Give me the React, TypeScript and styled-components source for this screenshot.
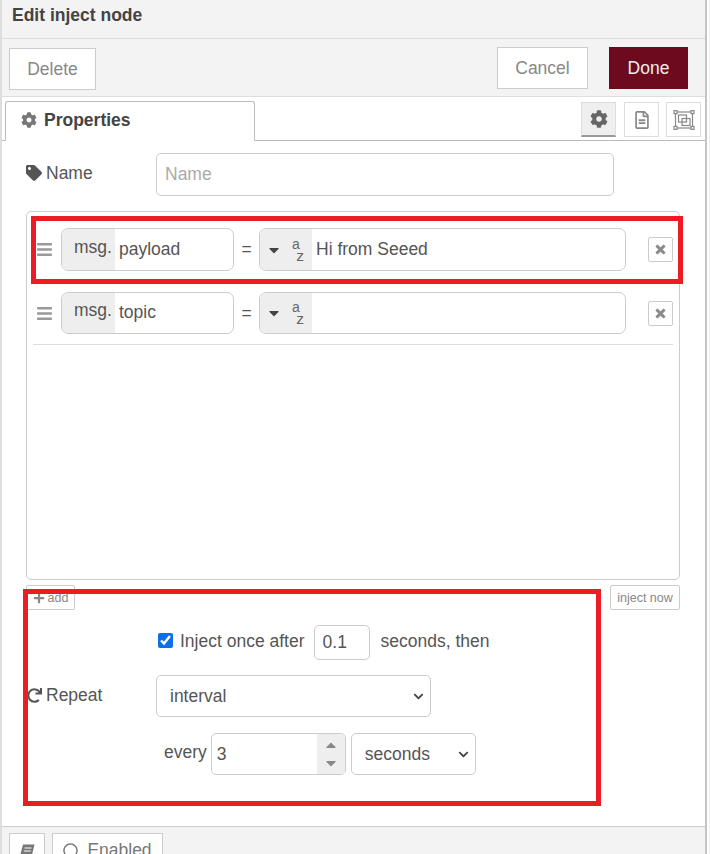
import React from "react";
import styled, { createGlobalStyle } from "styled-components";
import {
  FaBars,
  FaCaretDown,
  FaCaretUp,
  FaChevronDown,
  FaCog,
  FaPlus,
  FaRedo,
  FaRegCircle,
  FaRegFileAlt,
  FaTag,
  FaTimes,
} from "react-icons/fa";

const GlobalStyle = createGlobalStyle`
  html, body {
    margin: 0;
    padding: 0;
    background: #fff;
  }
  * {
    box-sizing: border-box;
  }
`;

const Page = styled.div`
  position: relative;
  width: 710px;
  height: 854px;
  overflow: hidden;
  display: flex;
  flex-direction: column;
  padding-right: 2px;
  border-right: 1px solid #efefef;
  font-family: "Liberation Sans", Arial, sans-serif;
  font-size: 17.5px;
  color: #555;
  background: #fff;
`;

const Tray = styled.div`
  flex: 1;
  display: flex;
  flex-direction: column;
  min-height: 0;
  border-left: 2px solid #dedede;
  border-right: 2px solid #c4c4c4;
`;

const Header = styled.div`
  height: 39px;
  flex: none;
  padding: 5px 0 0 10px;
  background: #f3f3f3;
  border-bottom: 1px solid #ddd;
  font-weight: bold;
  color: #444;
  line-height: 20px;
`;

const Toolbar = styled.div`
  height: 58px;
  flex: none;
  display: flex;
  align-items: flex-start;
  padding: 9px 17px 0 7px;
  background: #f3f3f3;
  border-bottom: 1px solid #ddd;
`;

const Button = styled.div<{ $primary?: boolean; $width: number }>`
  width: ${(p) => p.$width}px;
  height: 42px;
  display: flex;
  align-items: center;
  justify-content: center;
  border: 1px solid ${(p) => (p.$primary ? "#6e0a1e" : "#ccc")};
  background: ${(p) => (p.$primary ? "#6e0a1e" : "#fff")};
  color: ${(p) => (p.$primary ? "#eee" : "#888")};
`;

const ToolbarRight = styled.div`
  margin-left: auto;
  margin-top: -1px;
  display: flex;
  gap: 21px;
`;

const TabBar = styled.div`
  height: 44px;
  flex: none;
  display: flex;
  align-items: flex-start;
  padding: 4px 4px 0 3px;
  border-bottom: 1px solid #bbb;
`;

const Tab = styled.div`
  width: 250px;
  height: 40px;
  display: flex;
  align-items: center;
  gap: 7px;
  padding: 0 0 2px 15px;
  border: 1px solid #bbb;
  border-bottom: 1px solid #fff;
  border-radius: 3px 3px 0 0;
  background: #fff;
  font-weight: bold;
  color: #444;

  svg {
    color: #777;
    font-size: 16px;
  }
`;

const TabTools = styled.div`
  margin-left: auto;
  margin-top: 1px;
  display: flex;
  gap: 7px;
`;

const TabTool = styled.div<{ $active?: boolean }>`
  width: 35px;
  height: 35px;
  margin-right: ${(p) => (p.$active ? 1 : 0)}px;
  display: flex;
  align-items: center;
  justify-content: center;
  border: 1px solid #ddd;
  border-bottom: ${(p) => (p.$active ? "2px solid #999" : "1px solid #ddd")};
  background: ${(p) => (p.$active ? "#efefef" : "#fff")};
  color: ${(p) => (p.$active ? "#666" : "#888")};
  font-size: 18px;
`;

const Body = styled.div`
  flex: 1;
  min-height: 0;
  padding: 12px 0 0 24px;
`;

const FormRow = styled.div`
  display: flex;
  align-items: center;
`;

const NameRow = styled(FormRow)`
  height: 43px;
`;

const Label = styled.label<{ $drop?: number }>`
  width: 130px;
  flex: none;
  display: flex;
  align-items: center;
  gap: 4px;
  padding-bottom: ${(p) => p.$drop ?? 3}px;

  svg {
    font-size: 16px;
    color: #555;
  }
`;

const RepeatIcon = styled(FaRedo)`
  margin-left: 1px;
  width: 15px;
  height: 15px;
`;

const TextInput = styled.input<{ $width: number }>`
  width: ${(p) => p.$width}px;
  height: 43px;
  padding: 0 8px;
  border: 1px solid #ccc;
  border-radius: 5px;
  background: #fff;
  font: inherit;
  color: #555;
  outline: none;

  &::placeholder {
    color: #aaa;
    opacity: 1;
  }
`;

const DelayInput = styled(TextInput)`
  height: 35px;
  margin: 0 11px 0 9px;
`;

const ListBox = styled.div`
  width: 654px;
  height: 369px;
  margin-top: 15px;
  padding: 5px 6px 0;
  border: 1px solid #ccc;
  border-radius: 5px;
`;

const PropRow = styled.div<{ $last?: boolean }>`
  display: flex;
  align-items: center;
  height: ${(p) => (p.$last ? 63 : 65)}px;
  border-bottom: ${(p) => (p.$last ? "1px solid #ddd" : "none")};
`;

const Handle = styled.div`
  width: 28px;
  flex: none;
  display: flex;
  justify-content: center;
  color: #999;
  font-size: 17px;
  padding-right: 5px;
`;

const FieldBox = styled.div<{ $width: number }>`
  width: ${(p) => p.$width}px;
  height: 42.5px;
  flex: none;
  display: flex;
  align-items: center;
  overflow: hidden;
  border: 1px solid #ccc;
  border-radius: 7px;
  background: #fff;
`;

const MsgPrefix = styled.div`
  width: 53px;
  height: 100%;
  flex: none;
  display: flex;
  align-items: center;
  padding: 0 0 5px 12px;
  background: #eee;
`;

const FieldText = styled.div`
  padding-left: 4px;
  padding-bottom: 1px;
`;

const TypeSelect = styled.div`
  width: 52px;
  height: 100%;
  flex: none;
  display: flex;
  align-items: center;
  padding-left: 6px;
  background: #eee;
  color: #444;
  font-size: 16px;
`;

const TypeGlyph = styled.div`
  width: 12px;
  margin-left: 10px;
  display: flex;
  flex-direction: column;
  font-size: 14px;
  line-height: 12px;
  color: #666;
`;

const GlyphZ = styled.span`
  align-self: flex-end;
  font-size: 15.5px;
`;

const Equals = styled.div`
  width: 25px;
  flex: none;
  text-align: center;
`;

const RemoveButton = styled.div`
  width: 25px;
  height: 25px;
  margin-left: 22px;
  flex: none;
  display: flex;
  align-items: center;
  justify-content: center;
  border: 1px solid #ccc;
  border-radius: 2px;
  color: #888;
  font-size: 13px;

  svg {
    stroke: #888;
    stroke-width: 30;
  }
`;

const ListActions = styled.div`
  width: 654px;
  margin-top: 5px;
  display: flex;
  justify-content: space-between;
`;

const SmallButton = styled.div<{ $width: number }>`
  width: ${(p) => p.$width}px;
  height: 25px;
  display: flex;
  align-items: center;
  justify-content: center;
  gap: 3px;
  border: 1px solid #ccc;
  border-radius: 2px;
  font-size: 12.5px;
  color: #888;
`;

const OnceRow = styled(FormRow)`
  height: 35px;
  margin-top: 15px;
  padding-left: 132px;
`;

const Checkbox = styled.input`
  width: 15px;
  height: 15px;
  margin: 0 7px 5px 0;
  accent-color: #0b6fe8;
`;

const TextLabel = styled.span`
  padding-bottom: 3px;
`;

const RepeatRow = styled(FormRow)`
  margin-top: 15px;
  height: 42px;
`;

const SelectWrap = styled.div<{ $width: number }>`
  position: relative;
  width: ${(p) => p.$width}px;
  height: 42px;
  flex: none;

  svg {
    position: absolute;
    right: 7px;
    top: 16px;
    width: 11px;
    height: 11px;
    color: #444;
    pointer-events: none;
  }
`;

const NativeSelect = styled.select`
  appearance: none;
  width: 100%;
  height: 100%;
  padding: 0 13px;
  border: 1px solid #ccc;
  border-radius: 5px;
  background: #fff;
  font: inherit;
  color: #555;
  outline: none;
`;

const IntervalRow = styled(FormRow)`
  margin-top: 16px;
  padding-left: 138px;
  height: 42px;
`;

const Spinner = styled.div`
  width: 135px;
  height: 42px;
  margin: 0 5px 0 4px;
  display: flex;
  overflow: hidden;
  border: 1px solid #ccc;
  border-radius: 5px;
`;

const SpinnerValue = styled.div`
  flex: 1;
  display: flex;
  align-items: center;
  padding-left: 5px;
`;

const SpinnerArrows = styled.div`
  width: 28px;
  display: flex;
  flex-direction: column;
  align-items: center;
  justify-content: space-around;
  padding: 2px 0;
  background: #eee;
  color: #888;
  font-size: 16px;
`;

const Footer = styled.div`
  height: 28px;
  flex: none;
  display: flex;
  gap: 7px;
  padding: 6px 0 0 7px;
  background: #f3f3f3;
  border-top: 1px solid #ccc;
`;

const FooterButton = styled.div<{ $width: number }>`
  width: ${(p) => p.$width}px;
  height: 34px;
  flex: none;
  display: flex;
  align-items: center;
  justify-content: center;
  gap: 9px;
  border: 1px solid #ccc;
  background: #fff;
  color: #777;
`;

const BookSvg = styled.svg`
  margin-top: 6px;
`;

// hand-drawn annotations sitting on top of the screenshot
const RedBox = styled.div<{ $left: number; $top: number; $w: number; $h: number }>`
  position: absolute;
  left: ${(p) => p.$left}px;
  top: ${(p) => p.$top}px;
  width: ${(p) => p.$w}px;
  height: ${(p) => p.$h}px;
  border: 5px solid #ec1c24;
  pointer-events: none;
`;

function AppearanceIcon() {
  return (
    <svg width="22" height="20" viewBox="0 0 22 20" fill="none" stroke="#888" strokeWidth="1.2">
      <rect x="2.5" y="2" width="17" height="16" />
      <rect x="5.5" y="5" width="8" height="7" />
      <rect x="9" y="8.5" width="8" height="7" />
      <rect x="1" y="0.6" width="3" height="3" fill="#fff" />
      <rect x="18" y="0.6" width="3" height="3" fill="#fff" />
      <rect x="1" y="16.4" width="3" height="3" fill="#fff" />
      <rect x="18" y="16.4" width="3" height="3" fill="#fff" />
    </svg>
  );
}

// old font-awesome book, leaning to the right
function BookIcon() {
  return (
    <BookSvg width="16" height="18" viewBox="0 0 16 18">
      <path d="M4 0.5 H15.5 L12 15 Q11.6 17 10 17 H1.5 Q0 17 0.3 14.5 Z" fill="#777" />
      <path d="M5.5 4 H12.5 M4.8 7 H11.8" stroke="#fff" strokeWidth="1.2" />
    </BookSvg>
  );
}

function StringType() {
  return (
    <TypeSelect>
      <FaCaretDown />
      <TypeGlyph>
        <span>a</span>
        <GlyphZ>z</GlyphZ>
      </TypeGlyph>
    </TypeSelect>
  );
}

interface PropProps {
  name: string;
  value: string;
  last?: boolean;
}

function Prop(props: PropProps) {
  const { name, value, last } = props;
  return (
    <PropRow $last={last}>
      <Handle>
        <FaBars />
      </Handle>
      <FieldBox $width={173}>
        <MsgPrefix>msg.</MsgPrefix>
        <FieldText>{name}</FieldText>
      </FieldBox>
      <Equals>=</Equals>
      <FieldBox $width={367}>
        <StringType />
        <FieldText>{value}</FieldText>
      </FieldBox>
      <RemoveButton>
        <FaTimes />
      </RemoveButton>
    </PropRow>
  );
}

function App() {
  return (
    <Page>
      <GlobalStyle />
      <Tray>
        <Header>Edit inject node</Header>
        <Toolbar>
          <Button $width={87}>Delete</Button>
          <ToolbarRight>
            <Button $width={91}>Cancel</Button>
            <Button $width={79} $primary>
              Done
            </Button>
          </ToolbarRight>
        </Toolbar>
        <TabBar>
          <Tab>
            <FaCog />
            Properties
          </Tab>
          <TabTools>
            <TabTool $active>
              <FaCog />
            </TabTool>
            <TabTool>
              <FaRegFileAlt />
            </TabTool>
            <TabTool>
              <AppearanceIcon />
            </TabTool>
          </TabTools>
        </TabBar>
        <Body>
          <NameRow>
            <Label>
              <FaTag />
              Name
            </Label>
            <TextInput $width={458} placeholder="Name" readOnly />
          </NameRow>
          <ListBox>
            <Prop name="payload" value="Hi from Seeed" />
            <Prop name="topic" value="" last />
          </ListBox>
          <ListActions>
            <SmallButton $width={49}>
              <FaPlus size={12} />
              add
            </SmallButton>
            <SmallButton $width={70}>inject now</SmallButton>
          </ListActions>
          <OnceRow>
            <Checkbox type="checkbox" defaultChecked />
            <TextLabel>Inject once after</TextLabel>
            <DelayInput $width={56} defaultValue="0.1" readOnly />
            <TextLabel>seconds, then</TextLabel>
          </OnceRow>
          <RepeatRow>
            <Label $drop={1}>
              <RepeatIcon />
              Repeat
            </Label>
            <SelectWrap $width={275}>
              <NativeSelect defaultValue="interval">
                <option value="interval">interval</option>
              </NativeSelect>
              <FaChevronDown />
            </SelectWrap>
          </RepeatRow>
          <IntervalRow>
            <TextLabel>every</TextLabel>
            <Spinner>
              <SpinnerValue>3</SpinnerValue>
              <SpinnerArrows>
                <FaCaretUp />
                <FaCaretDown />
              </SpinnerArrows>
            </Spinner>
            <SelectWrap $width={125}>
              <NativeSelect defaultValue="seconds">
                <option value="seconds">seconds</option>
              </NativeSelect>
              <FaChevronDown />
            </SelectWrap>
          </IntervalRow>
        </Body>
        <Footer>
          <FooterButton $width={36}>
            <BookIcon />
          </FooterButton>
          <FooterButton $width={111}>
            <FaRegCircle size={15} />
            Enabled
          </FooterButton>
        </Footer>
      </Tray>
      <RedBox $left={31} $top={216} $w={652} $h={68} />
      <RedBox $left={23} $top={589} $w={578} $h={217} />
    </Page>
  );
}

export default App;
